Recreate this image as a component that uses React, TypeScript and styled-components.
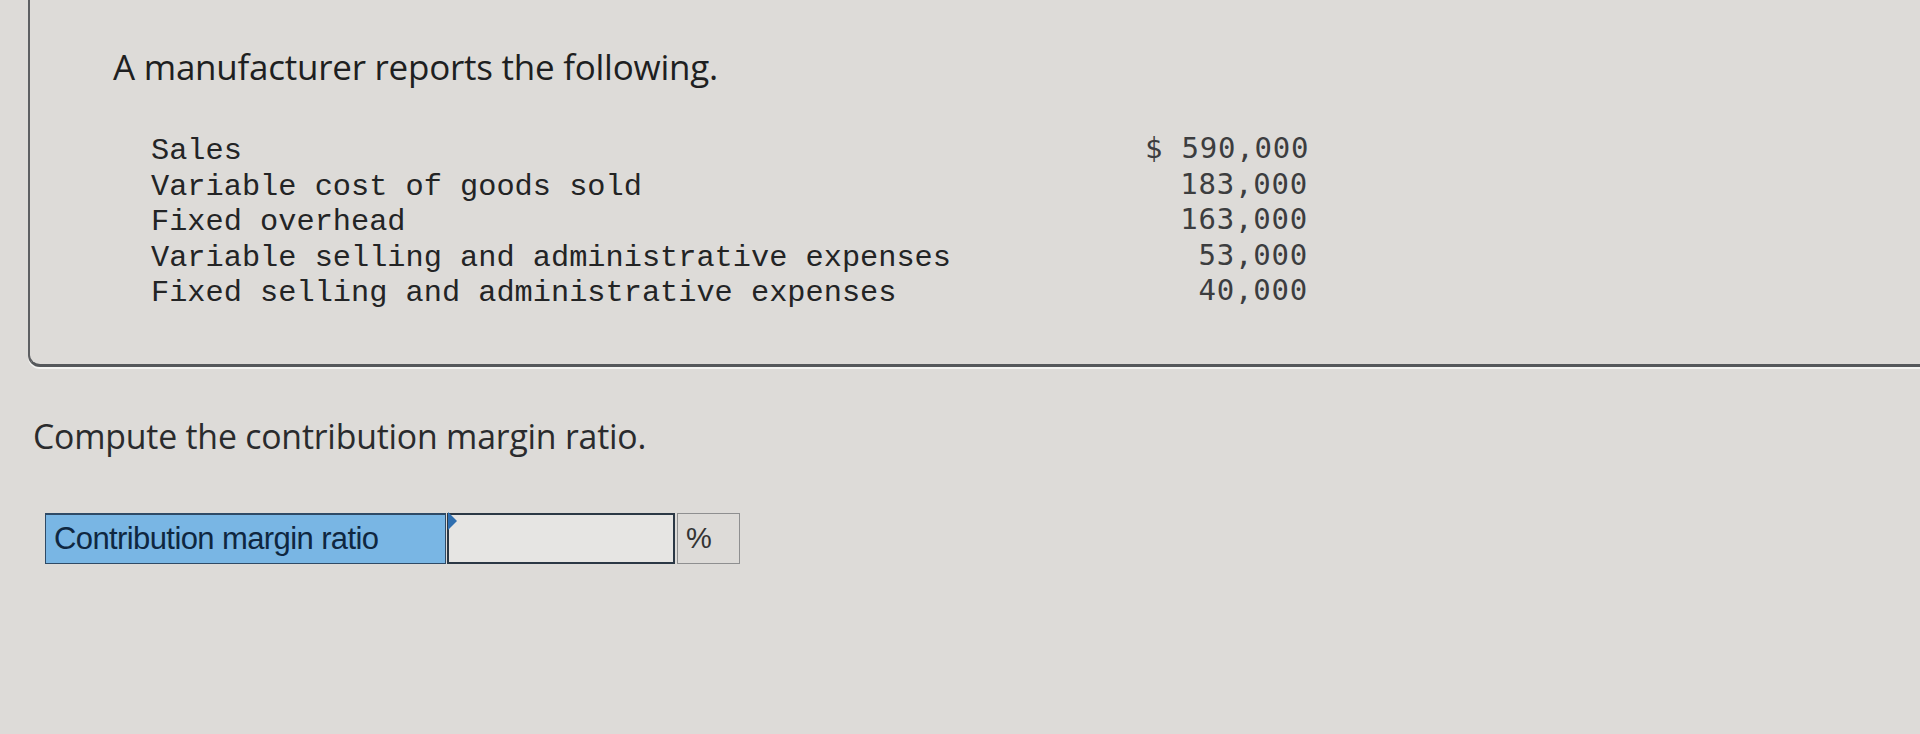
import React from "react";
import styled, { createGlobalStyle } from "styled-components";

const Global = createGlobalStyle`
  html, body { margin: 0; padding: 0; }
  body {
    background: #dddbd8;
    width: 1920px;
    height: 734px;
    overflow: hidden;
  }
`;

const Page = styled.div`
  display: flex;
  flex-direction: column;
  width: 1920px;
  height: 734px;
`;

const Panel = styled.section`
  margin-left: 28px;
  height: 367px;
  box-sizing: border-box;
  border-left: 2px solid #5d5f62;
  border-bottom: 3px solid #55585b;
  border-bottom-left-radius: 12px;
  box-shadow: 0 2px 0 #f4f4f2;
  padding: 47px 0 0 83px;
  display: flex;
  flex-direction: column;
`;

const Heading = styled.h1`
  margin: 0;
  font-family: "Open Sans", "Lato", sans-serif;
  font-weight: 400;
  font-size: 35px;
  line-height: 40px;
  letter-spacing: -0.25px;
  color: #1e1f21;
`;

const DataTable = styled.div`
  margin-top: 47px;
  margin-left: 38px;
  display: grid;
  grid-template-columns: 994px 163px;
`;

const Label = styled.div`
  font-family: "Liberation Mono", "Courier New", monospace;
  font-size: 30.3px;
  line-height: 35.5px;
  color: #232425;
  white-space: pre;
`;

const Amount = styled.div`
  font-family: "DejaVu Sans Mono", monospace;
  font-size: 29px;
  line-height: 35.5px;
  letter-spacing: 0.8px;
  color: #3c3d3f;
  white-space: pre;
  text-align: right;
  transform: translateY(-3px);
`;

const Question = styled.p`
  margin: 49px 0 0 33px;
  font-family: "Open Sans", "Lato", sans-serif;
  font-size: 33.8px;
  line-height: 40px;
  letter-spacing: -0.2px;
  color: #2a2b2d;
`;

const AnswerRow = styled.div`
  margin: 57px 0 0 45px;
  display: flex;
  height: 51px;
`;

const LabelCell = styled.div`
  width: 401px;
  box-sizing: border-box;
  background: #79b6e4;
  border: 1px solid #2e4a66;
  border-top-width: 2px;
  display: flex;
  align-items: center;
  padding-left: 8px;
  font-family: "Liberation Sans", Arial, sans-serif;
  font-size: 31px;
  letter-spacing: -0.6px;
  color: #0f2740;
`;

const InputCell = styled.div`
  position: relative;
  width: 228px;
  box-sizing: border-box;
  margin-left: 1px;
  background: #e6e5e3;
  border: 2px solid #2b3845;
`;

const Marker = styled.span`
  position: absolute;
  left: -1px;
  top: -1px;
  width: 0;
  height: 0;
  border-top: 9px solid transparent;
  border-bottom: 9px solid transparent;
  border-left: 9px solid #2f6fb0;
  transform: translateY(-2px);
`;

const UnitCell = styled.div`
  width: 63px;
  box-sizing: border-box;
  margin-left: 2px;
  border: 1px solid #8e8f90;
  display: flex;
  align-items: center;
  padding-left: 8px;
  font-family: "Liberation Sans", Arial, sans-serif;
  font-size: 29px;
  color: #333;
`;

const rows: [string, string][] = [
  ["Sales", "$ 590,000"],
  ["Variable cost of goods sold", "183,000"],
  ["Fixed overhead", "163,000"],
  ["Variable selling and administrative expenses", "53,000"],
  ["Fixed selling and administrative expenses", "40,000"],
];

export default function App() {
  return (
    <Page>
      <Global />
      <Panel>
        <Heading>A manufacturer reports the following.</Heading>
        <DataTable>
          {rows.map(([l, a]) => (
            <React.Fragment key={l}>
              <Label>{l}</Label>
              <Amount>{a}</Amount>
            </React.Fragment>
          ))}
        </DataTable>
      </Panel>
      <Question>Compute the contribution margin ratio.</Question>
      <AnswerRow>
        <LabelCell>Contribution margin ratio</LabelCell>
        <InputCell>
          <Marker />
        </InputCell>
        <UnitCell>%</UnitCell>
      </AnswerRow>
    </Page>
  );
}
